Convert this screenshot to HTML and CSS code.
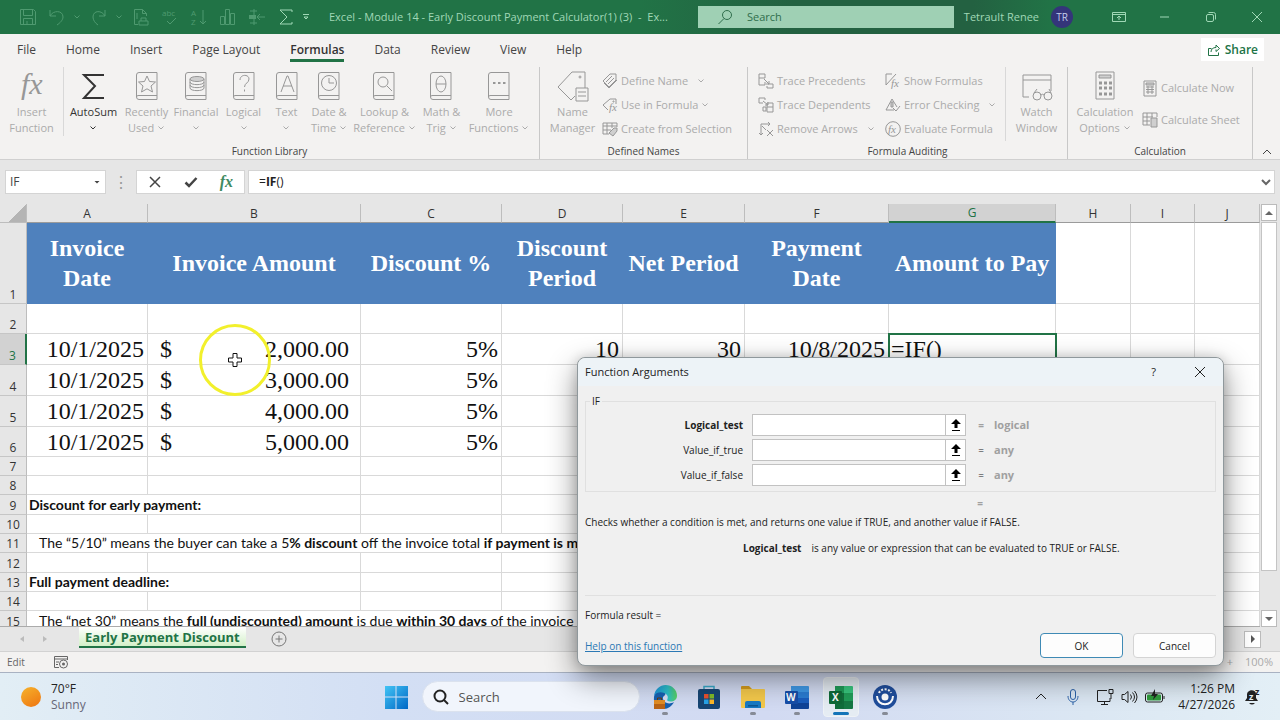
FILE: index.html
```html
<!DOCTYPE html>
<html lang="en">
<head>
<meta charset="utf-8">
<title>Excel - Early Discount Payment Calculator</title>
<link rel="stylesheet" href="styles.css">
</head>
<body>
<svg class="defs" aria-hidden="true">
  <symbol id="chev" viewBox="0 0 8 8"><path d="M1.500 2.500 4 5l2.500-2.500"/></symbol>
  <symbol id="book" viewBox="0 0 24 30"><path d="M4 1.500h18v27H4a2.500 2.500 0 0 1-2.500-2.500V4A2.500 2.500 0 0 1 4 1.500zM22 24.500H4a2 2 0 0 0-2.500 1.500"/></symbol>
  <symbol id="uparrow" viewBox="0 0 12 14"><path class="solid" d="M6 1l5 5H7.500v4h-3V6H1z"/><path d="M2 12.500h8"/></symbol>
</svg>

<header class="titlebar">
  <div class="titlebar-left">
    <nav class="quick" aria-label="Quick access">
      <button class="q dim" aria-label="Save"><svg viewBox="0 0 18 18"><path d="M1.500 1.500h13l2 2v13h-15zM4.500 1.500v6h9v-6M4.500 16.500v-6h9v6M8 13v3"/></svg></button>
      <button class="q dim" aria-label="Undo"><svg viewBox="0 0 18 18"><path d="M2 2v6h6M2 8c3-6 13-6 13 1 0 3-3 6-6 8"/></svg></button>
      <button class="q dim small" aria-label="Undo list"><svg viewBox="0 0 8 8"><use href="#chev"/></svg></button>
      <button class="q dim" aria-label="Redo"><svg viewBox="0 0 18 18"><path d="M15 2v6H9M15 8C12 2 3 2 3 9c0 3 2 6 5 8"/></svg></button>
      <button class="q dim small" aria-label="Redo list"><svg viewBox="0 0 8 8"><use href="#chev"/></svg></button>
      <button class="q dim" aria-label="Print preview"><svg viewBox="0 0 18 18"><path d="M6 16.500H2.500v-15h8l4 4V8M10.500 1.500v4h4M7 13h9v4H7zM9 13v-3h5v3M5 5v6"/></svg></button>
      <button class="q dim" aria-label="Spelling"><svg viewBox="0 0 18 18"><text x="1" y="8" class="qtext">abc</text><path d="M6 13l3 3 6-6"/></svg></button>
      <button class="q dim" aria-label="Sort ascending"><svg viewBox="0 0 18 18"><text x="1" y="8" class="qtext">A</text><text x="1" y="17" class="qtext">Z</text><path d="M13 2v14M10 13l3 3 3-3"/></svg></button>
      <button class="q dim" aria-label="Chart"><svg viewBox="0 0 18 18"><path d="M1.500 8.500h4v8h-4zM6.500 1.500h4v15h-4zM11.500 5.500h4v11h-4z"/></svg></button>
      <button class="q dim" aria-label="Insert row"><svg viewBox="0 0 18 18"><path d="M2 3h7M2 15h7M6 1v16M17 9H9M12 6L9 9l3 3"/><path class="solid" d="M1 7h7v4H1z"/></svg></button>
      <button class="q" aria-label="AutoSum"><svg viewBox="0 0 18 18"><path d="M15 4V2H3l7 7-7 7h12v-2"/></svg></button>
      <button class="q small" aria-label="Customize"><svg viewBox="0 0 8 8"><path d="M1 1.500h6M2 4l2 2 2-2z"/></svg></button>
    </nav>
    <span class="doc-title">Excel - Module 14 - Early Discount Payment Calculator(1) (3) &nbsp;-&nbsp; Ex...</span>
  </div>
  <label class="search">
    <svg viewBox="0 0 16 16"><circle cx="10" cy="6" r="4.500"/><path d="M7 9.500L1.500 15"/></svg>
    <input type="text" placeholder="Search" aria-label="Search">
  </label>
  <div class="titlebar-right">
    <span class="user">Tetrault Renee</span>
    <span class="avatar">TR</span>
    <button class="win" aria-label="Ribbon display options"><svg viewBox="0 0 14 12"><path d="M.5 1.500h13v9H.5zM.5 3.500h13M7 9V5M5 7l2-2 2 2"/></svg></button>
    <button class="win" aria-label="Minimize"><svg viewBox="0 0 14 12"><path d="M2 6h9"/></svg></button>
    <button class="win" aria-label="Restore"><svg viewBox="0 0 14 12"><rect x="2.500" y="3.500" width="7" height="7" rx="1.500"/><path d="M4.500 1.500h5a2 2 0 0 1 2 2v5"/></svg></button>
    <button class="win" aria-label="Close"><svg viewBox="0 0 14 12"><path d="M2 1l10 10M12 1L2 11"/></svg></button>
  </div>
</header>

<nav class="tabs">
  <button>File</button><button>Home</button><button>Insert</button><button>Page Layout</button><button class="active">Formulas</button><button>Data</button><button>Review</button><button>View</button><button>Help</button>
  <button class="share"><svg viewBox="0 0 14 14"><path d="M4.500 5.500h-3v7h10v-3M4 9c0-3 2-4.500 5-4.500V2l3.500 3.500L9 8.500V6.500"/></svg>Share</button>
</nav>

<section class="ribbon">
  <div class="group g-lib">
    <div class="tools">
      <button class="big"><svg viewBox="0 0 32 32"><text x="5" y="24" class="fx-big">fx</text></svg><span>Insert<br>Function</span></button>
      <i class="sep"></i>
      <button class="big on"><svg viewBox="0 0 32 32"><path class="thick" d="M26 6V5H7l11 11L7 28h19v-1"/></svg><span>AutoSum<br><svg class="chev"><use href="#chev"/></svg></span></button>
      <button class="big"><svg viewBox="0 0 32 32"><use href="#book" x="4" y="1" width="24" height="30"/><path d="M16 6l2.500 5.500 6 .5-4.500 4 1.500 6-5.500-3.200L10.500 22l1.500-6-4.500-4 6-.5z"/></svg><span>Recently<br>Used <svg class="chev"><use href="#chev"/></svg></span></button>
      <button class="big"><svg viewBox="0 0 32 32"><use href="#book" x="4" y="1" width="24" height="30"/><ellipse class="fill" cx="17" cy="9" rx="7" ry="2.500"/><path d="M10 9v9c0 3.500 14 3.500 14 0V9M10 12c0 3.500 14 3.500 14 0M10 15c0 3.500 14 3.500 14 0"/></svg><span>Financial<br><svg class="chev"><use href="#chev"/></svg></span></button>
      <button class="big"><svg viewBox="0 0 32 32"><use href="#book" x="4" y="1" width="24" height="30"/><path d="M12 10c0-6 9-6 9-1 0 4-4.500 4-4.500 8M16.500 19.500v2"/></svg><span>Logical<br><svg class="chev"><use href="#chev"/></svg></span></button>
      <button class="big"><svg viewBox="0 0 32 32"><use href="#book" x="4" y="1" width="24" height="30"/><path d="M10 22l6-16h1l6 16M12 16h9"/></svg><span>Text<br><svg class="chev"><use href="#chev"/></svg></span></button>
      <button class="big"><svg viewBox="0 0 32 32"><use href="#book" x="4" y="1" width="24" height="30"/><circle cx="16" cy="13" r="7.500"/><path d="M16 8v5h5"/></svg><span>Date &amp;<br>Time <svg class="chev"><use href="#chev"/></svg></span></button>
      <button class="big"><svg viewBox="0 0 32 32"><use href="#book" x="4" y="1" width="24" height="30"/><circle cx="15" cy="12" r="5"/><path d="M19 16l5 5"/></svg><span>Lookup &amp;<br>Reference <svg class="chev"><use href="#chev"/></svg></span></button>
      <button class="big"><svg viewBox="0 0 32 32"><use href="#book" x="4" y="1" width="24" height="30"/><ellipse cx="16" cy="14" rx="5" ry="8"/><path d="M11 14h10"/></svg><span>Math &amp;<br>Trig <svg class="chev"><use href="#chev"/></svg></span></button>
      <button class="big"><svg viewBox="0 0 32 32"><use href="#book" x="4" y="1" width="24" height="30"/><path class="thick" d="M10 13h2.500M15 13h2.500M20 13h2.500"/></svg><span>More<br>Functions <svg class="chev"><use href="#chev"/></svg></span></button>
    </div>
    <h2>Function Library</h2>
  </div>
  <div class="group g-names">
    <div class="tools">
      <button class="big"><svg viewBox="0 0 32 32"><path d="M19 26l-4 4L2 17 16 2h13v16"/><circle cx="24" cy="7" r="1"/><path d="M20 18h12v13H20zM22 22h8M22 26h8"/></svg><span>Name<br>Manager</span></button>
      <div class="stack">
        <button><svg viewBox="0 0 16 16"><path d="M1 8l7-7h6v6l-7 7zM4 9l6-6M6 11l6-6"/><path d="M2 10l5 5 8-8"/></svg>Define Name <svg class="chev far"><use href="#chev"/></svg></button>
        <button><svg viewBox="0 0 16 16"><path d="M6 13L1 8l7-6h6v5"/><circle cx="11.500" cy="4.500" r=".6"/><text x="7" y="14" class="fx-small">fx</text></svg>Use in Formula <svg class="chev"><use href="#chev"/></svg></button>
        <button><svg viewBox="0 0 16 16"><path d="M7 13H1V2h14v4M1 5h14M1 9h8M5 2v11M10 2v5"/><path class="fill" d="M7 12l5-5h3v3l-4 5z"/></svg>Create from Selection</button>
      </div>
    </div>
    <h2>Defined Names</h2>
  </div>
  <div class="group g-audit">
    <div class="tools">
      <div class="stack">
        <button><svg viewBox="0 0 16 16"><path d="M1 1h6v4H1zM1 5v7h6V9M6 6l5 5M11 8v3H8M10 11h5v4H9v-2"/></svg>Trace Precedents</button>
        <button><svg viewBox="0 0 16 16"><path d="M5 6H1V1h6v2M5 4l5 4M10 5v3H7M9 6h6v9H9zM9 10h6M5 10h3v4H5z"/></svg>Trace Dependents</button>
        <button><svg viewBox="0 0 16 16"><path d="M3 14V3h9M10 1l2 2-2 2M1 12l2 2 2-2M4 5l4 4M9 9l6 6M15 9l-6 6"/></svg>Remove Arrows <svg class="chev far"><use href="#chev"/></svg></button>
      </div>
      <div class="stack">
        <button><svg viewBox="0 0 16 16"><path d="M7 1H1v11L11 1"/><text x="6" y="14" class="fx-small">fx</text></svg>Show Formulas</button>
        <button><svg viewBox="0 0 16 16"><path d="M9 13H1L7 2l5 8"/><path class="fill" d="M6 5h2v5H6z"/><path d="M8 11l3 3 4-5"/></svg>Error Checking <svg class="chev far"><use href="#chev"/></svg></button>
        <button><svg viewBox="0 0 16 16"><circle cx="8" cy="8" r="7.300"/><text x="3" y="12" class="fx-small">fx</text></svg>Evaluate Formula</button>
      </div>
      <i class="sep"></i>
      <button class="big"><svg viewBox="0 0 32 32"><path d="M8 27H2V5h28v16M2 10h28"/><circle cx="16" cy="26" r="4"/><circle cx="27" cy="26" r="4"/><path d="M20 25q1.500-1.500 3 0M13 23l3-4M30 23l-2-4"/></svg><span>Watch<br>Window</span></button>
    </div>
    <h2>Formula Auditing</h2>
  </div>
  <div class="group g-calc">
    <div class="tools">
      <button class="big"><svg viewBox="0 0 32 32"><path d="M7 2h18v27H7z"/><path class="fill" d="M10 5h12v3H10z"/><path class="dots" d="M10 13h13M10 18h13M10 24h13"/></svg><span>Calculation<br>Options <svg class="chev"><use href="#chev"/></svg></span></button>
      <div class="stack two">
        <button><svg viewBox="0 0 16 16"><path d="M2 1h12v15H2z"/><path class="fill" d="M4 3h8v2H4z"/><path d="M4 7h8M4 9.500h8M4 12h8M6 6v8M10 6v8"/></svg>Calculate Now</button>
        <button><svg viewBox="0 0 16 16"><path d="M8 13H1V1h14v4M1 5h10M1 9h7M5 1v12M10 1v4"/><path class="fill" d="M9 6h6v9H9z"/></svg>Calculate Sheet</button>
      </div>
    </div>
    <h2>Calculation</h2>
  </div>
  <button class="collapse" aria-label="Collapse ribbon"><svg viewBox="0 0 10 8"><path d="M1 6l4-4 4 4"/></svg></button>
</section>

<div class="formula-bar">
  <div class="namebox"><input type="text" value="IF" aria-label="Name box"><svg viewBox="0 0 8 8"><path class="solid" d="M1.500 3h5L4 5.500z"/></svg></div>
  <span class="grip">⋮</span>
  <div class="fbtns">
    <button aria-label="Cancel entry"><svg viewBox="0 0 14 14"><path d="M2 2l10 10M12 2L2 12"/></svg></button>
    <button aria-label="Enter"><svg viewBox="0 0 14 14"><path class="tick" d="M1.500 7.500L5 11l7.500-8"/></svg></button>
    <button aria-label="Insert function" class="fx">fx</button>
  </div>
  <label class="finput"><span>=<b>IF</b>()</span><svg viewBox="0 0 10 8"><path d="M1 2l4 4 4-4"/></svg></label>
</div>

<main class="sheet">
  <div class="grid-wrap">
    <table class="grid">
      <colgroup><col class="c-row"><col class="c-a"><col class="c-b"><col class="c-c"><col class="c-d"><col class="c-e"><col class="c-f"><col class="c-g"><col class="c-h"><col class="c-i"><col class="c-j"></colgroup>
      <thead><tr><th class="corner"></th><th>A</th><th>B</th><th>C</th><th>D</th><th>E</th><th>F</th><th class="sel">G</th><th>H</th><th>I</th><th>J</th></tr></thead>
      <tbody>
        <tr class="head"><th>1</th><td>Invoice Date</td><td>Invoice Amount</td><td>Discount %</td><td>Discount Period</td><td>Net Period</td><td>Payment Date</td><td>Amount to Pay</td><td class="e"></td><td class="e"></td><td class="e"></td></tr>
        <tr class="mid"><th>2</th><td></td><td></td><td></td><td></td><td></td><td></td><td></td><td></td><td></td><td></td></tr>
        <tr class="data"><th class="sel">3</th><td>10/1/2025</td><td class="money"><div><span>$</span><span>2,000.00</span></div></td><td>5%</td><td>10</td><td>30</td><td>10/8/2025</td><td class="active">=IF()</td><td></td><td></td><td></td></tr>
        <tr class="data"><th>4</th><td>10/1/2025</td><td class="money"><div><span>$</span><span>3,000.00</span></div></td><td>5%</td><td></td><td></td><td></td><td></td><td></td><td></td><td></td></tr>
        <tr class="data"><th>5</th><td>10/1/2025</td><td class="money"><div><span>$</span><span>4,000.00</span></div></td><td>5%</td><td></td><td></td><td></td><td></td><td></td><td></td><td></td></tr>
        <tr class="data last"><th>6</th><td>10/1/2025</td><td class="money"><div><span>$</span><span>5,000.00</span></div></td><td>5%</td><td></td><td></td><td></td><td></td><td></td><td></td><td></td></tr>
        <tr class="low"><th>7</th><td></td><td></td><td></td><td></td><td></td><td></td><td></td><td></td><td></td><td></td></tr>
        <tr class="low"><th>8</th><td></td><td></td><td></td><td></td><td></td><td></td><td></td><td></td><td></td><td></td></tr>
        <tr class="low tall"><th>9</th><td colspan="2"><b>Discount for early payment:</b></td><td></td><td></td><td></td><td></td><td></td><td></td><td></td><td></td></tr>
        <tr class="low"><th>10</th><td></td><td></td><td></td><td></td><td></td><td></td><td></td><td></td><td></td><td></td></tr>
        <tr class="low"><th>11</th><td colspan="7" class="indent">The “5/10” means the buyer can take a 5<b>% discount</b> off the invoice total <b>if payment is ma</b></td><td></td><td></td><td></td></tr>
        <tr class="low tall"><th>12</th><td></td><td></td><td></td><td></td><td></td><td></td><td></td><td></td><td></td><td></td></tr>
        <tr class="low"><th>13</th><td colspan="2"><b>Full payment deadline:</b></td><td></td><td></td><td></td><td></td><td></td><td></td><td></td><td></td></tr>
        <tr class="low"><th>14</th><td></td><td></td><td></td><td></td><td></td><td></td><td></td><td></td><td></td><td></td></tr>
        <tr class="low tall"><th>15</th><td colspan="7" class="indent">The “net 30” means the <b>full (undiscounted) amount</b> is due <b>within 30 days</b> of the invoice d</td><td></td><td></td><td></td></tr>
      </tbody>
    </table>
  </div>
  <div class="vscroll">
    <button aria-label="Scroll up"><svg viewBox="0 0 8 8"><path class="solid" d="M0 6h8L4 2z"/></svg></button>
    <i class="thumb"></i>
    <i class="track"></i>
    <button aria-label="Scroll down"><svg viewBox="0 0 8 8"><path class="solid" d="M0 2h8L4 6z"/></svg></button>
  </div>
</main>

<div class="sheet-tabs">
  <div class="arrows"><svg viewBox="0 0 8 8"><path class="solid" d="M6 1v6L2 4z"/></svg><svg viewBox="0 0 8 8"><path class="solid" d="M2 1v6l4-3z"/></svg></div>
  <button class="sheet-tab">Early Payment Discount</button>
  <button class="add" aria-label="New sheet"><svg viewBox="0 0 16 16"><circle cx="8" cy="8" r="7"/><path d="M8 4.500v7M4.500 8h7"/></svg></button>
  <button class="hright" aria-label="Scroll right"><svg viewBox="0 0 8 8"><path class="solid" d="M2 0v8l4-4z"/></svg></button>
</div>

<footer class="status">
  <span>Edit</span>
  <svg viewBox="0 0 16 14"><path d="M6 12.500H1.500v-11h13V5M1.500 4h13M3 7h3M3 9.500h2"/><circle cx="10.500" cy="9" r="4"/><circle class="solid" cx="10.500" cy="9" r="1.500"/></svg>
  <span class="zoom"><span>+</span><span>100%</span></span>
</footer>

<footer class="taskbar">
  <div class="weather"><i class="sun"></i><div>70°F<br><small>Sunny</small></div></div>
  <div class="apps">
    <button class="app" aria-label="Start"><svg viewBox="0 0 24 24"><defs><linearGradient id="w" x1="0" y1="0" x2="1" y2="1"><stop offset="0" stop-color="#42c4f5"/><stop offset="1" stop-color="#0067c5"/></linearGradient></defs><path fill="url(#w)" d="M1 1h10.500v10.500H1zM12.500 1H24v10.500H12.500zM1 12.500h10.500V24H1zM12.500 12.500H24V24H12.500z"/></svg></button>
    <label class="tsearch"><svg viewBox="0 0 16 16"><circle cx="7" cy="7" r="5.500"/><path d="M11 11l4 4"/></svg><input type="text" placeholder="Search" aria-label="Search Windows"></label>
    <button class="app run" aria-label="Edge"><svg viewBox="0 0 24 24"><defs><linearGradient id="e" x1="0" y1="0" x2="1" y2="0"><stop offset="0" stop-color="#1d92d8"/><stop offset=".6" stop-color="#2cc0c8"/><stop offset="1" stop-color="#58cf60"/></linearGradient></defs><path fill="#1660b0" d="M1 12c1-6 8-7 11-4 2 2-3 3-2 6 1 4 6 6 11 3-2 4-6 7-10 7C5 24 0 19 1 12z"/><path fill="url(#e)" d="M1 11C2 4 7 0 12.500 0 19 0 24 5 24 10.500c0 4-3 6-6.500 6-3 0-4-1-3-2.500C17 8 5 4 1 11z"/><path fill="#ba6416" d="M1 15h11v9H1z"/><path fill="#e28d24" d="M1 15h11v4H1z"/><path fill="none" stroke="#6e3a0b" d="M4.500 15v-2h4v2"/></svg></button>
    <button class="app" aria-label="Store"><svg viewBox="0 0 24 24"><path fill="none" stroke="#38a8c8" stroke-width="1.500" d="M7 5V1.500h10V5"/><rect x="1" y="4" width="22" height="20" rx="2" fill="#174674"/><path fill="#e8512f" d="M7 9h4.500v4.500H7z"/><path fill="#7fba28" d="M12.500 9H17v4.500h-4.500z"/><path fill="#28a4e8" d="M7 14.500h4.500V19H7z"/><path fill="#fcb928" d="M12.500 14.500H17V19h-4.500z"/></svg></button>
    <button class="app run" aria-label="File Explorer"><svg viewBox="0 0 24 24"><path fill="#d39b1d" d="M0 2q0-1 1-1h7l3 3H0z"/><path fill="#f3c84b" d="M0 4h23q1 0 1 1v17q0 1-1 1H1q-1 0-1-1z"/><path fill="#1779c4" d="M4 23v-5q0-2 2-2h12q2 0 2 2v5z"/><path fill="#0b5593" d="M7 20h10v1.500H7z"/></svg></button>
    <button class="app run" aria-label="Word"><svg viewBox="0 0 24 24"><path fill="#3f98e5" d="M6 1h17q1 0 1 1v5H6z"/><path fill="#2a7bd0" d="M6 7h18v6H6z"/><path fill="#1a5dbd" d="M6 13h18v5H6z"/><path fill="#104397" d="M6 18h18v5q0 1-1 1H6z"/><rect y="6" width="13" height="13" rx="1" fill="#174ea8"/><text x="1" y="16" class="letter">W</text></svg></button>
    <button class="app run current" aria-label="Excel"><svg viewBox="0 0 24 24"><path fill="#1f9b57" d="M6 1h9v7H6z"/><path fill="#38c57d" d="M15 1h8q1 0 1 1v6h-9z"/><path fill="#116d3b" d="M6 8h9v16H6z"/><path fill="#219d58" d="M15 8h9v8h-9z"/><path fill="#167944" d="M15 16h9v7q0 1-1 1h-8z"/><rect y="6" width="13" height="13" rx="1" fill="#0f6a37"/><text x="3" y="16" class="letter">X</text></svg></button>
    <button class="app run" aria-label="Recorder"><svg viewBox="0 0 24 24"><circle cx="12" cy="12" r="12" fill="#204e9c"/><circle cx="12" cy="12" r="3.500" fill="#fff"/><path fill="none" stroke="#fff" stroke-width="2" d="M4 11c0 11 16 11 16 0"/><path fill="none" stroke="#fff" stroke-width="2" stroke-dasharray="2 1.500" d="M6 8c2-5 10-5 12 0"/></svg></button>
  </div>
  <div class="tray">
    <svg class="t-up" viewBox="0 0 18 18"><path d="M4 11l5-5 5 5"/></svg>
    <svg class="mic" viewBox="0 0 18 18"><rect x="6.500" y="1.500" width="5" height="10" rx="2.500"/><path d="M4 8c0 8 10 8 10 0M9 14v3"/></svg>
    <svg viewBox="0 0 18 18"><path d="M11 2.500H1.500v11H14V10M5 16.500h7M8.500 14v2M13 1.500h4v4h-4zM15 6v5"/></svg>
    <svg viewBox="0 0 18 18"><path d="M2 6.500h2.500L8 3.500v11l-3.500-3H2zM10.500 6.500q2 2.500 0 5M12.500 4.500q4 4.500 0 9M14.500 3q5 6 0 12"/></svg>
    <svg class="batt" viewBox="0 0 22 18"><rect x="1.500" y="5" width="17" height="9" rx="2"/><rect class="green" x="3" y="6.500" width="14" height="6" rx="1"/><path d="M20 8v3"/><path class="solid" d="M11 1L7 8h3l-1 4 5-6h-3z"/></svg>
    <div class="clock">1:26 PM<br>4/27/2026</div>
    <svg class="bell" viewBox="0 0 18 18"><path class="solid" d="M2 13l2-3V7c0-6 9-6 9-1v4l2 3zM6 15h6q-3 3-6 0z"/><text x="6" y="12" class="z">z</text><text x="12" y="7" class="zz">z</text></svg>
  </div>
</footer>

<div class="pointer" aria-hidden="true"><svg viewBox="0 0 16 16"><path d="M6 1.500h4V6h4.500v4H10v4.500H6V10H1.500V6H6z"/></svg></div>

<form class="dialog" role="dialog" aria-label="Function Arguments">
  <div class="dlg-title"><span>Function Arguments</span><button type="button">?</button><button type="button" aria-label="Close"><svg viewBox="0 0 12 12"><path d="M1 1l10 10M11 1L1 11"/></svg></button></div>
  <fieldset>
    <legend>IF</legend>
    <div class="arg"><label for="a1"><b>Logical_test</b></label><span class="ref"><input id="a1" type="text"><button type="button" aria-label="Collapse"><svg><use href="#uparrow"/></svg></button></span><span class="eq grey"><b>=</b></span><b class="kind">logical</b></div>
    <div class="arg"><label for="a2">Value_if_true</label><span class="ref"><input id="a2" type="text"><button type="button" aria-label="Collapse"><svg><use href="#uparrow"/></svg></button></span><span class="eq">=</span><b class="kind">any</b></div>
    <div class="arg"><label for="a3">Value_if_false</label><span class="ref"><input id="a3" type="text"><button type="button" aria-label="Collapse"><svg><use href="#uparrow"/></svg></button></span><span class="eq">=</span><b class="kind">any</b></div>
  </fieldset>
  <div class="arg total"><span></span><span></span><span class="eq grey"><b>=</b></span></div>
  <p class="desc">Checks whether a condition is met, and returns one value if TRUE, and another value if FALSE.</p>
  <p class="hint"><b>Logical_test</b><span>is any value or expression that can be evaluated to TRUE or FALSE.</span></p>
  <p class="result">Formula result =</p>
  <div class="actions"><a href="#help">Help on this function</a><button type="submit" class="ok">OK</button><button type="button">Cancel</button></div>
</form>
</body>
</html>
```
FILE: styles.css
```css
* { box-sizing: border-box; }
body {
  margin: 0;
  height: 100vh;
  overflow: hidden;
  position: relative;
  display: flex;
  flex-direction: column;
  font: 12px/16px "Open Sans", "Noto Sans", sans-serif;
  color: #444;
  background: #e6e6e6;
}
button { font: inherit; color: inherit; background: none; border: 0; padding: 0; white-space: nowrap; }
input { font: inherit; color: inherit; background: none; border: 0; padding: 0; min-width: 0; outline: 0; }
svg { fill: none; stroke: currentColor; flex: none; overflow: visible; }
svg text { fill: currentColor; stroke: none; }
.solid { fill: currentColor; stroke: none; }
.defs { position: absolute; width: 0; height: 0; }

/* title bar */
.titlebar {
  flex: 0 0 34px;
  display: grid;
  grid-template-columns: 698fr 256fr 326fr;
  align-items: center;
  background: linear-gradient(90deg, #217346 50%, #236141 62%, #236141 76%, #217346 82%);
  color: #a0d8b6;
  font-size: 11px;
}
.titlebar-left { display: flex; align-items: center; padding-left: 19px; min-width: 0; }
.quick { display: flex; align-items: center; gap: 11px; flex: none; width: 310px; }
.q { width: 18px; height: 18px; }
.q svg { width: 18px; height: 18px; display: block; }
.q.small { width: 8px; margin-left: -4px; margin-right: -2px; }
.q.small svg { width: 8px; }
.q.dim { color: #4f9a70; }
.qtext { font: 8px "Open Sans", sans-serif; }
.doc-title { white-space: nowrap; }
.search { display: flex; align-items: center; gap: 14px; height: 22px; padding-left: 19px; background: #9fd0b4; color: #2f6e4c; }
.search svg { width: 16px; height: 16px; }
.search input { flex: 1; }
input::placeholder { color: inherit; opacity: 1; }
.titlebar-right { display: flex; align-items: center; justify-content: flex-end; padding-right: 16px; white-space: nowrap; }
.avatar { width: 22px; height: 22px; margin: 0 39px 0 12px; border-radius: 50%; background: #34357a; color: #c5cdec; font-size: 10px; line-height: 22px; text-align: center; }
.win { width: 14px; height: 12px; margin-right: 32px; }
.win:last-child { margin-right: 0; }
.win svg { width: 14px; height: 12px; display: block; }

/* ribbon tabs */
.tabs { flex: 0 0 30px; display: flex; align-items: stretch; gap: 30px; padding: 0 16px 0 17px; background: #f3f2f1; }
.tabs button { padding-top: 6px; border-bottom: 3px solid transparent; margin-bottom: 2px; }
.tabs .active { font-weight: 600; border-color: #217346; color: #333; }
.tabs .share { display: flex; align-items: center; gap: 4px; margin: 4px 0 3px auto; padding: 0 6px; border: 0; background: #fff; color: #217346; font-weight: 600; }
.share svg { width: 14px; height: 14px; }

/* ribbon */
.ribbon { flex: 0 0 96px; display: flex; background: #f3f2f1; border-bottom: 1px solid #d0d0d0; font-size: 11px; }
.group { display: flex; flex-direction: column; border-right: 1px solid #c8c8c8; margin-top: 3px; }
.g-lib { flex: 0 0 540px; }
.g-names { flex: 0 0 208px; }
.g-audit { flex: 0 0 320px; }
.g-calc { flex: 0 0 185px; }
.group h2 { margin: 0; font-size: 10px; font-weight: 400; line-height: 16px; text-align: center; color: #444; }
.tools { flex: 1; display: grid; justify-items: center; align-content: start; color: #ababab; }
.g-lib .tools { grid-template-columns: 63px 1px 59px 47px 52px 43px 43px 42px 69px 45px 70px; }
.g-names .tools { grid-template-columns: 59px 1fr; padding-left: 3px; }
.g-audit .tools { grid-template-columns: 127px 1fr 1px 61px; padding-left: 10px; }
.g-calc .tools { grid-template-columns: 74px 1fr; }
.big { display: flex; flex-direction: column; align-items: center; line-height: 16px; }
.big > svg { width: 32px; height: 32px; margin: 3px 0 2px; color: #979797; stroke-width: 1; }
.big.on, .big.on > svg { color: #333; }
.big .chev, .stack .chev { width: 8px; height: 8px; }
.thick { stroke-width: 2; }
.fill { fill: #cfcfcf; }
.dots { stroke-width: 3; stroke-dasharray: 3 2; }
.fx-big { font: italic 30px "Liberation Serif", serif; }
.fx-small { font: italic 11px "Liberation Serif", serif; }
.sep { width: 1px; background: #d8d8d8; }
.stack { display: flex; flex-direction: column; justify-self: start; padding-top: 2px; }
.stack button { display: flex; align-items: center; gap: 3px; height: 24px; }
.stack > button > svg:first-child { width: 16px; height: 16px; color: #979797; }
.stack .far { margin-left: 6px; }
.stack.two { padding-top: 9px; gap: 8px; }
.collapse { margin: auto 8px 3px auto; }
.collapse svg { width: 10px; height: 8px; display: block; }

/* formula bar */
.formula-bar { flex: 0 0 44px; display: flex; align-items: center; padding: 0 5px; }
.formula-bar > div, .finput { height: 24px; background: #fff; border: 1px solid #d4d4d4; display: flex; align-items: center; }
.namebox { width: 101px; padding: 0 4px; }
.namebox input { flex: 1; }
.namebox svg { width: 8px; height: 8px; }
.grip { width: 30px; text-align: center; font-size: 16px; color: #999; }
.fbtns { width: 109px; justify-content: space-around; margin-right: 3px; }
.fbtns svg { width: 14px; height: 14px; display: block; stroke-width: 1.5; }
.fbtns .tick { stroke-width: 2.5; }
.fx { font: italic 700 16px/20px "Liberation Serif", serif; color: #3f8a62; }
.finput { flex: 1; padding: 0 3px 0 10px; color: #222; }
.finput svg { width: 10px; height: 8px; margin-left: auto; stroke-width: 2; color: #666; }

/* worksheet */
.sheet { flex: 1; min-height: 0; display: flex; overflow: hidden; }
.grid-wrap { flex: 1; overflow: hidden; border-bottom: 1px solid #ababab; }
.grid { table-layout: fixed; width: 1260px; border-collapse: separate; border-spacing: 0; background: #fff; }
.c-row { width: 27px; } .c-a { width: 121px; } .c-b { width: 213px; } .c-c { width: 141px; }
.c-d { width: 121px; } .c-e { width: 122px; } .c-f { width: 144px; } .c-g { width: 167px; }
.c-h { width: 75px; } .c-i { width: 64px; } .c-j { width: 65px; }
.grid th { font-weight: 400; padding: 0; background: #e6e6e6; border-right: 1px solid #bdbdbd; border-bottom: 1px solid #c6c6c6; color: #333; }
.grid thead th { height: 19px; line-height: 17px; border-bottom-color: #9b9b9b; }
.grid thead .sel { background: #d2d2d2; color: #217346; border-bottom: 2px solid #217346; }
.grid .corner { background: linear-gradient(135deg, #e6e6e6 60%, #b4b4b4 60%); border-bottom-color: #bdbdbd; }
.grid td { padding: 0 2px; border-right: 1px solid #d9d9d9; border-bottom: 1px solid #d9d9d9; white-space: nowrap; color: #111; }
.grid tbody th { vertical-align: bottom; line-height: 16px; }
.grid tbody th.sel { background: #d2d2d2; color: #217346; border-right: 2px solid #217346; }
.head { height: 81px; }
.grid .head td { background: #4f81bd; color: #fff; border-color: #4f81bd; font: 700 24px/30px "Liberation Serif", serif; text-align: center; white-space: normal; }
.grid .head td.e { background: #fff; border-color: #d9d9d9; }
.mid { height: 30px; }
.data { height: 31px; }
.last { height: 30px; }
.grid .data td { font: 24px/28px "Liberation Serif", serif; text-align: right; padding-right: 3px; }
.money div { display: flex; justify-content: space-between; padding: 0 8px 0 10px; }
.grid .data td.active { text-align: left; outline: 2px solid #217346; outline-offset: -1px; }
.low { height: 19px; }
.low.tall { height: 20px; }
.grid .low td { font: 14px/16px Lato, sans-serif; }
.grid .low td.indent { padding-left: 12px; }
.vscroll { flex: 0 0 20px; display: flex; flex-direction: column; padding: 0 3px 0 1px; }
.vscroll button { height: 17px; background: #fff; border: 1px solid #bbb; display: grid; place-items: center; color: #666; }
.vscroll svg { width: 8px; height: 8px; }
.thumb { flex: 9; background: #fff; border: 1px solid #c4c4c4; margin-top: 1px; }
.track { flex: 1; }

/* sheet tabs and status */
.sheet-tabs { flex: 0 0 24px; display: flex; align-items: center; padding-right: 19px; }
.arrows { width: 79px; display: flex; gap: 15px; padding-left: 18px; color: #bbb; }
.arrows svg { width: 8px; height: 8px; }
.sheet-tab { height: 21px; margin-bottom: 3px; padding: 0 6px; font-size: 13px; font-weight: 700; color: #217346; background: linear-gradient(#fff, #d3f0c8); border-bottom: 2px solid #217346; }
.add { margin-left: 25px; color: #777; }
.add svg { width: 16px; height: 16px; display: block; }
.hright { margin-left: auto; width: 17px; height: 17px; background: #fff; border: 1px solid #bbb; display: grid; place-items: center; color: #555; }
.hright svg { width: 8px; height: 8px; }
.status { flex: 0 0 22px; display: flex; align-items: center; gap: 28px; padding: 0 7px; background: #f3f2f1; border-top: 1px solid #d2d2d2; border-bottom: 1px solid #a9b2c2; font-size: 10px; color: #666; }
.status svg { width: 16px; height: 14px; }
.zoom { margin-left: auto; display: flex; gap: 12px; font-size: 11px; color: #aaa; }

/* taskbar */
.taskbar { flex: 0 0 47px; display: grid; grid-template-columns: 1fr auto 1fr; align-items: center; background: linear-gradient(90deg, #e2eef5, #d3dff4 30%, #d2daf2 60%, #dbe7f3 85%, #e3eff6); color: #222; }
.weather { display: flex; align-items: center; gap: 10px; padding-left: 21px; }
.sun { width: 20px; height: 20px; border-radius: 50%; background: linear-gradient(150deg, #f6b32c, #ee7410); }
small { font-size: 12px; color: #667; }
.apps { display: flex; align-items: center; }
.app { width: 36px; height: 40px; margin-right: 8px; border-radius: 4px; border: 1px solid transparent; position: relative; display: grid; place-items: center; }
.app svg { width: 24px; height: 24px; stroke: none; }
.app:last-child { margin-right: 0; }
.app.run::after { content: ""; position: absolute; bottom: 1px; left: 50%; width: 6px; height: 3px; margin-left: -3px; border-radius: 2px; background: #868b96; }
.app.current { background: #e5ecf3; border-color: #eef2f6; }
.app.current::after { width: 16px; margin-left: -8px; background: #1474b8; }
.letter { font: 700 10px "Open Sans", sans-serif; fill: #fff; }
.tsearch { display: flex; align-items: center; gap: 10px; width: 218px; height: 31px; margin-right: 7px; padding: 0 10px; border-radius: 16px; background: #f1f5fc; border: 1px solid #dbe2ee; font-size: 13px; color: #555; }
.tsearch svg { width: 16px; height: 16px; stroke-width: 2; color: #222; }
.tsearch input { flex: 1; }
.tray { display: flex; align-items: center; justify-content: flex-end; gap: 6px; padding-right: 19px; }
.tray svg { width: 18px; height: 18px; }
.tray .t-up { margin-right: 8px; }
.tray .mic { color: #2c62a8; margin-right: 8px; }
.tray .batt { width: 22px; }
.green { fill: #2f9a3c; stroke: none; }
.clock { text-align: right; margin-left: 6px; margin-right: 2px; }
.bell text { fill: #e3eff6; }
.z { font: 700 9px "Open Sans", sans-serif; }
.bell .zz { font: 700 9px "Open Sans", sans-serif; fill: #222; }

/* recorded mouse pointer with its highlight ring */
.pointer { position: absolute; left: 199px; top: 324px; width: 72px; height: 72px; border: 3px solid #f2f02c; border-radius: 50%; display: grid; place-items: center; }
.pointer svg { width: 16px; height: 16px; fill: #fff; stroke: #111; }

/* function arguments dialog */
.dialog { position: absolute; left: 577px; top: 357px; width: 647px; padding: 0 7px 7px; background: #f0f0f0; border: 1px solid #8f989c; border-radius: 8px; box-shadow: 0 12px 30px rgba(0, 0, 0, .45), 0 0 12px rgba(0, 0, 0, .15); font-size: 10px; color: #222; }
.dlg-title { display: flex; align-items: center; height: 28px; margin: 0 -7px; padding: 0 17px 0 7px; background: #edf3f7; border-radius: 8px 8px 0 0; font-size: 11px; }
.dlg-title span { flex: 1; }
.dlg-title button { margin-left: 38px; }
.dlg-title svg { width: 12px; height: 12px; display: block; }
fieldset { margin: 7px 0 0; padding: 3px 0 4px; border: 1px solid #e0e0e0; min-width: 0; }
legend { margin-left: 4px; padding: 0 2px; }
.arg { display: grid; grid-template-columns: 158px 214px 26px 1fr; align-items: center; height: 25px; }
.arg label { text-align: right; padding-right: 1px; }
.ref { display: flex; margin-left: 8px; width: 214px; height: 22px; background: #fff; border: 1px solid #c2c2c2; }
.ref input { flex: 1; }
.ref button { width: 20px; border-left: 1px solid #c2c2c2; display: grid; place-items: center; color: #000; }
.ref svg { width: 12px; height: 14px; }
.eq { text-align: right; }
.kind { padding-left: 10px; font-size: 11px; }
.kind, .grey { color: #a0a0a0; }
.arg.total { height: 22px; }
.dialog p { margin: 0; }
.dialog .hint { display: flex; gap: 10px; margin: 10px 0 0 158px; padding-bottom: 39px; }
.dialog .result { border-top: 1px solid #e0e0e0; padding-top: 11px; }
.actions { display: flex; align-items: center; gap: 10px; margin-top: 10px; }
.actions a { flex: 1; color: #2b78b4; }
.actions button { width: 83px; height: 25px; background: #fdfdfd; border: 1px solid #d4d4d4; border-radius: 4px; }
.actions .ok { border-color: #3f8ab5; }
```
